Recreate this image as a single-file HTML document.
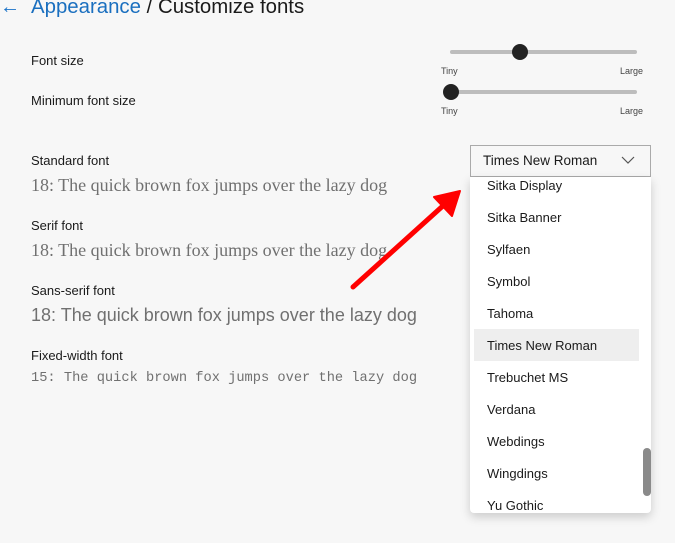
<!DOCTYPE html>
<html><head><meta charset="utf-8"><style>
body{margin:0;width:675px;height:543px;overflow:hidden;background:#f7f7f7;position:relative;font-family:"Liberation Sans",sans-serif;color:#1a1a1a}
.a{position:absolute;white-space:nowrap}
.lbl{font-size:13px}
.ser{font-family:"Liberation Serif",serif;font-size:18px;color:#707070}
.tick{font-size:9px;color:#444}
.track{position:absolute;height:4px;background:#bdbdbd;border-radius:2px}
.thumb{position:absolute;width:16px;height:16px;border-radius:50%;background:#222}
.dd{position:absolute;left:470px;top:177px;width:181px;height:336px;background:#fff;box-shadow:0 4px 10px rgba(0,0,0,.18);border-radius:0 0 4px 4px;overflow:hidden}
.it{position:absolute;left:17px;font-size:13px;color:#1a1a1a}
</style></head><body>
<div class="a" style="left:0;top:-4px;font-size:20px;color:#1a73c8">&#8592;</div>
<div class="a" style="left:31px;top:-4px;font-size:20.4px"><span style="color:#1a6fbf">Appearance</span> / Customize fonts</div>
<div class="a lbl" style="left:31px;top:53px">Font size</div>
<div class="a lbl" style="left:31px;top:93px">Minimum font size</div>
<div class="track" style="left:450px;top:50px;width:187px"></div>
<div class="thumb" style="left:512px;top:44px"></div>
<div class="a tick" style="left:441px;top:66px">Tiny</div>
<div class="a tick" style="left:620px;top:66px">Large</div>
<div class="track" style="left:450px;top:90px;width:187px"></div>
<div class="thumb" style="left:443px;top:84px"></div>
<div class="a tick" style="left:441px;top:106px">Tiny</div>
<div class="a tick" style="left:620px;top:106px">Large</div>
<div class="a lbl" style="left:31px;top:153px">Standard font</div>
<div class="a ser" style="left:31px;top:175px">18: The quick brown fox jumps over the lazy dog</div>
<div class="a lbl" style="left:31px;top:218px">Serif font</div>
<div class="a ser" style="left:31px;top:240px">18: The quick brown fox jumps over the lazy dog</div>
<div class="a lbl" style="left:31px;top:283px">Sans-serif font</div>
<div class="a" style="left:31px;top:305px;font-size:18px;color:#707070">18: The quick brown fox jumps over the lazy dog</div>
<div class="a lbl" style="left:31px;top:348px">Fixed-width font</div>
<div class="a" style="left:31px;top:371px;font-family:'Liberation Mono',monospace;font-size:13.7px;color:#707070">15: The quick brown fox jumps over the lazy dog</div>
<div class="a" style="left:470px;top:145px;width:179px;height:30px;border:1px solid #aaa;background:#f7f7f7"></div>
<div class="a" style="left:483px;top:153px;font-size:13.5px">Times New Roman</div>
<svg class="a" style="left:620px;top:154px" width="16" height="12"><path d="M2 3 L8 9 L14 3" fill="none" stroke="#555" stroke-width="1.2"/></svg>
<div class="dd">
<div class="it" style="top:1px">Sitka Display</div>
<div class="it" style="top:33px">Sitka Banner</div>
<div class="it" style="top:65px">Sylfaen</div>
<div class="it" style="top:97px">Symbol</div>
<div class="it" style="top:129px">Tahoma</div>
<div style="position:absolute;left:4px;top:152px;width:165px;height:32px;background:#eeeeee"></div>
<div class="it" style="top:161px">Times New Roman</div>
<div class="it" style="top:193px">Trebuchet MS</div>
<div class="it" style="top:225px">Verdana</div>
<div class="it" style="top:257px">Webdings</div>
<div class="it" style="top:289px">Wingdings</div>
<div class="it" style="top:321px">Yu Gothic</div>
<div style="position:absolute;left:173px;top:271px;width:8px;height:48px;background:#8a8a8a;border-radius:4px"></div>
</div>
<svg class="a" style="left:0;top:0" width="675" height="543"><line x1="353" y1="287" x2="445" y2="204" stroke="#f00" stroke-width="5" stroke-linecap="round"/><polygon points="460,191 434,197 452,216" fill="#f00" stroke="#f00" stroke-width="2" stroke-linejoin="round"/></svg>
</body></html>
